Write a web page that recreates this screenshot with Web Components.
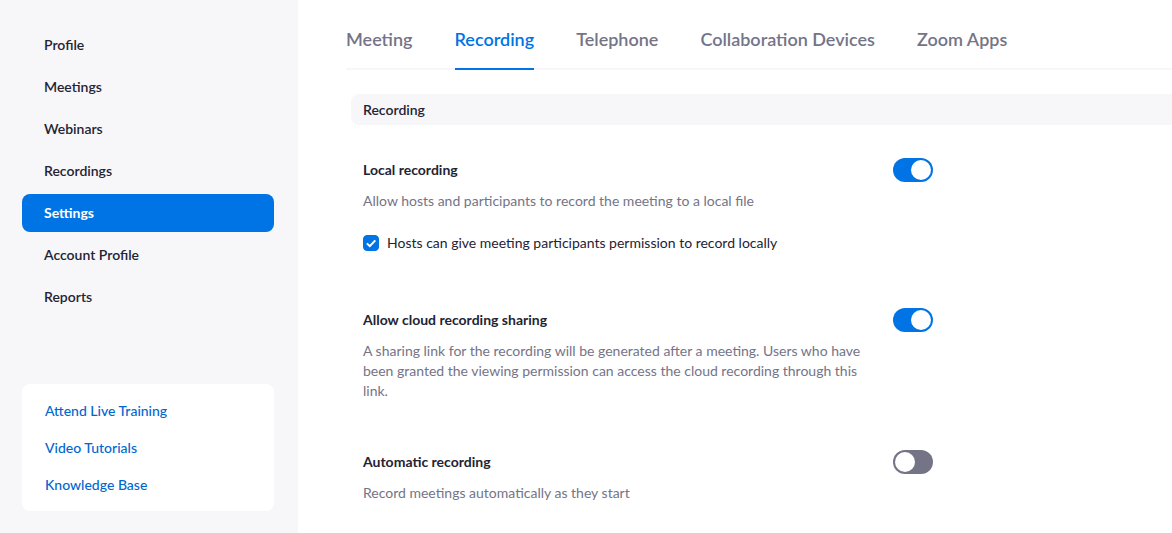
<!DOCTYPE html>
<html lang="en">
<head>
<meta charset="utf-8">
<meta name="viewport" content="width=device-width, initial-scale=1">
<title>Settings - Recording</title>
<style>
  body {
    margin: 0;
    font: 14px/20px Lato, "Open Sans", sans-serif;
    color: #232333;
    background: #fff;
    --blue: #0074e4;
    --link: #0067cf;
    --muted: #747487;
    --surface: #f7f7fa;
  }
</style>
</head>
<body>
<settings-page></settings-page>

<script>
const define = (name, html, setup) => {
  const template = document.createElement('template');
  template.innerHTML = html;
  customElements.define(name, class extends HTMLElement {
    constructor() {
      super();
      this.attachShadow({ mode: 'open' }).append(template.content.cloneNode(true));
    }
    connectedCallback() {
      if (setup) setup(this, this.shadowRoot);
    }
  });
};

define('nav-item', `
  <style>
    :host { display: block; }
    a {
      display: block; padding: 9px 22px; border-radius: 8px;
      color: inherit; text-decoration: none; font-weight: 600;
    }
    a[aria-current] { background: var(--blue); color: #fff; font-weight: 700; }
  </style>
  <a href="#"><slot></slot></a>`,
  (host, root) => {
    if (host.hasAttribute('current')) root.querySelector('a').setAttribute('aria-current', 'page');
  });

define('help-link', `
  <style>
    :host { display: block; }
    a { color: var(--link); text-decoration: none; font-weight: 500; }
  </style>
  <a href="#"><slot></slot></a>`);

define('side-bar', `
  <style>
    :host { display: block; background: var(--surface); padding: 26px 24px 22px 22px; }
    nav { display: grid; gap: 4px; margin-bottom: 68px; }
    .help {
      display: grid; gap: 17px; padding: 17px 23px 16px;
      background: #fff; border-radius: 8px;
    }
  </style>
  <nav aria-label="Main">
    <nav-item>Profile</nav-item>
    <nav-item>Meetings</nav-item>
    <nav-item>Webinars</nav-item>
    <nav-item>Recordings</nav-item>
    <nav-item current>Settings</nav-item>
    <nav-item>Account Profile</nav-item>
    <nav-item>Reports</nav-item>
  </nav>
  <div class="help">
    <help-link>Attend Live Training</help-link>
    <help-link>Video Tutorials</help-link>
    <help-link>Knowledge Base</help-link>
  </div>`);

define('tab-item', `
  <style>
    :host { display: block; }
    button {
      display: block; padding: 0 0 17px; margin: 0 0 -2px; border: 0;
      border-bottom: 2px solid transparent; background: none;
      font: 600 18px/24px Lato, "Open Sans", sans-serif; color: var(--muted);
      white-space: nowrap; cursor: pointer;
    }
    button[aria-selected="true"] { color: var(--blue); border-color: var(--blue); }
  </style>
  <button type="button" role="tab"><slot></slot></button>`,
  (host, root) => root.querySelector('button')
    .setAttribute('aria-selected', String(host.hasAttribute('selected'))));

define('tab-bar', `
  <style>
    :host { display: block; }
    div { display: flex; gap: 42px; border-bottom: 2px solid var(--surface); }
  </style>
  <div role="tablist"><slot></slot></div>`);

define('section-title', `
  <style>
    :host { display: block; }
    h2 {
      margin: 0; padding: 6px 12px 5px; border-radius: 8px 0 0 8px;
      background: var(--surface); font-size: 14px; font-weight: 600;
    }
  </style>
  <h2><slot></slot></h2>`);

define('toggle-switch', `
  <style>
    :host { display: block; }
    input {
      appearance: none; display: flex; justify-content: flex-start;
      box-sizing: border-box; width: 40px; height: 24px; margin: 0; padding: 2px;
      border-radius: 12px; background: var(--muted); cursor: pointer;
    }
    input::before { content: ""; width: 20px; height: 20px; border-radius: 50%; background: #fff; }
    input:checked { background: var(--blue); justify-content: flex-end; }
  </style>
  <input type="checkbox" role="switch">`,
  (host, root) => {
    const input = root.querySelector('input');
    input.checked = host.hasAttribute('checked');
    input.setAttribute('aria-label', host.getAttribute('label'));
  });

define('check-option', `
  <style>
    :host { display: block; margin: 22px 0 6px; }
    label { display: flex; align-items: center; gap: 8px; }
    .box { display: grid; flex: none; }
    .box > * { grid-area: 1 / 1; }
    input {
      appearance: none; box-sizing: border-box; width: 16px; height: 16px; margin: 0;
      border: 1px solid var(--muted); border-radius: 4px;
    }
    input:checked { background: var(--blue); border-color: var(--blue); }
    svg { pointer-events: none; visibility: hidden; }
    input:checked + svg { visibility: visible; }
  </style>
  <label>
    <span class="box">
      <input type="checkbox" checked>
      <svg width="16" height="16" viewBox="0 0 16 16" fill="none" stroke="#fff" stroke-width="2" aria-hidden="true"><path d="M3.9 8.4 6.8 11.2 12.3 5.4"/></svg>
    </span>
    <span><slot></slot></span>
  </label>`);

define('setting-row', `
  <style>
    :host { display: grid; grid-template-columns: minmax(0, 500px) auto; column-gap: 30px; }
    h3 { margin: 0 0 11px; font-size: 14px; font-weight: 700; }
    p { margin: 0; color: var(--muted); }
    .control { margin-top: -2px; }
  </style>
  <div>
    <h3></h3>
    <p><slot></slot></p>
    <slot name="options"></slot>
  </div>
  <div class="control"><slot name="control"></slot></div>`,
  (host, root) => { root.querySelector('h3').textContent = host.getAttribute('heading'); });

define('settings-page', `
  <style>
    :host { display: grid; grid-template-columns: 298px minmax(0, 1fr); min-height: 100vh; }
    main { padding: 27px 0 30px 48px; overflow: hidden; }
    section-title { margin: 24px 0 35px 5px; }
    .rows { display: grid; gap: 51px; padding: 0 17px; }
  </style>
  <side-bar></side-bar>
  <main>
    <tab-bar>
      <tab-item>Meeting</tab-item>
      <tab-item selected>Recording</tab-item>
      <tab-item>Telephone</tab-item>
      <tab-item>Collaboration Devices</tab-item>
      <tab-item>Zoom Apps</tab-item>
    </tab-bar>
    <section-title>Recording</section-title>
    <div class="rows">
      <setting-row heading="Local recording">
        Allow hosts and participants to record the meeting to a local file
        <check-option slot="options">Hosts can give meeting participants permission to record locally</check-option>
        <toggle-switch slot="control" label="Local recording" checked></toggle-switch>
      </setting-row>
      <setting-row heading="Allow cloud recording sharing">
        A sharing link for the recording will be generated after a meeting. Users who have been granted the viewing permission can access the cloud recording through this link.
        <toggle-switch slot="control" label="Allow cloud recording sharing" checked></toggle-switch>
      </setting-row>
      <setting-row heading="Automatic recording">
        Record meetings automatically as they start
        <toggle-switch slot="control" label="Automatic recording"></toggle-switch>
      </setting-row>
    </div>
  </main>`);
</script>
</body>
</html>
